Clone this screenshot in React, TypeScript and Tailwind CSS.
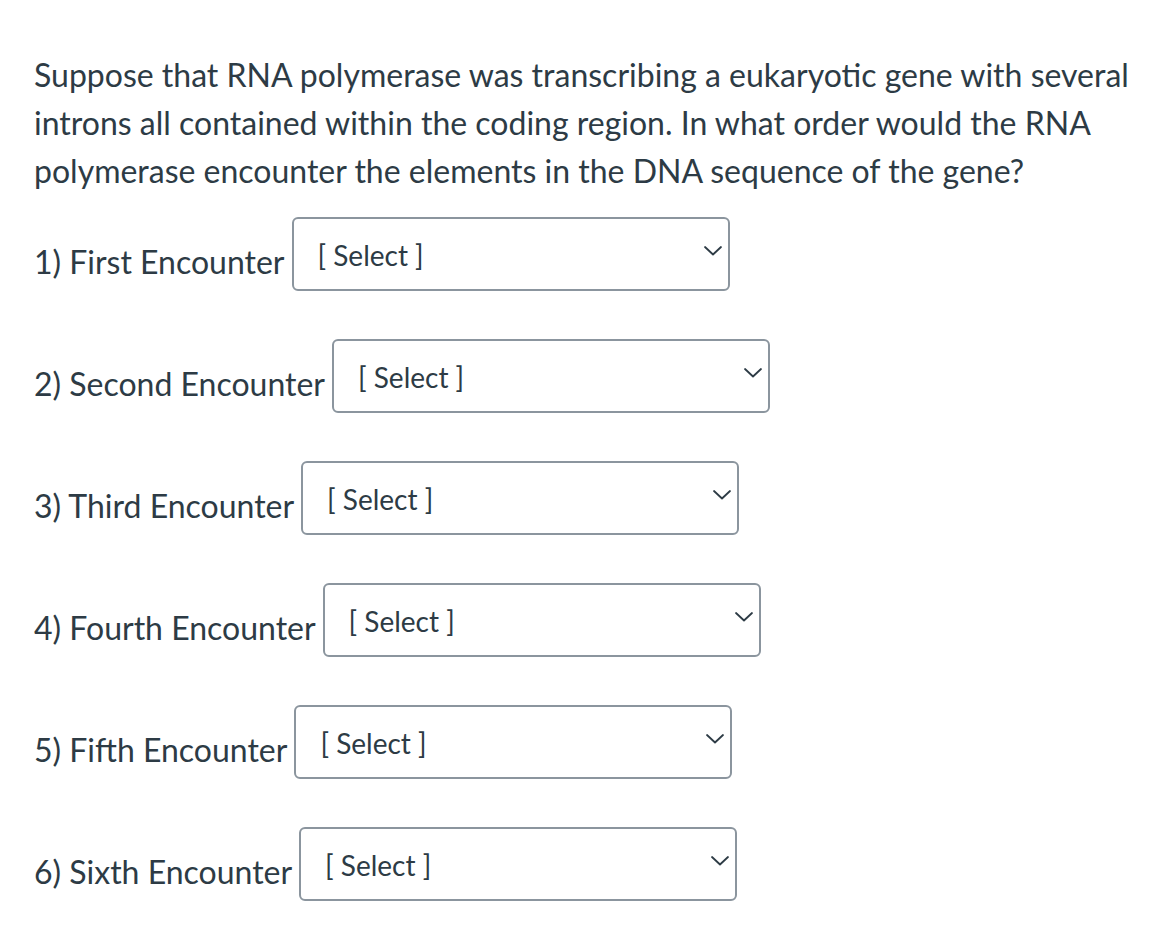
import React from 'react';

const rows = [
  '1) First Encounter',
  '2) Second Encounter',
  '3) Third Encounter',
  '4) Fourth Encounter',
  '5) Fifth Encounter',
  '6) Sixth Encounter',
];

function Chevron() {
  return (
    <svg width="20" height="12" viewBox="0 0 20 12" fill="none" className="shrink-0">
      <path d="M2 2 L10 9.5 L18 2" stroke="#2d3b45" strokeWidth="1.8" strokeLinecap="round" strokeLinejoin="round" />
    </svg>
  );
}

function SelectBox() {
  return (
    <div className="w-[438px] h-[74px] border-2 border-[#8b959e] rounded-[6px] flex items-start justify-between pl-[24px] pr-[5px] bg-white">
      <span className="text-[28px] leading-[74px] -mt-[1px]">[ Select ]</span>
      <div className="h-full flex items-center -mt-[3px]">
        <Chevron />
      </div>
    </div>
  );
}

export default function App() {
  return (
    <div
      className="w-[1168px] h-[938px] bg-white text-[#2d3b45] px-[34px] pt-[51px]"
      style={{ fontFamily: 'Lato, "Open Sans", sans-serif' }}
    >
      <p className="text-[32px] leading-[48px]">
        Suppose that RNA polymerase was transcribing a eukaryotic gene with several introns all contained within the coding region. In what order would the RNA polymerase encounter the elements in the DNA sequence of the gene?
      </p>
      <div className="mt-[22px] flex flex-col gap-[48px]">
        {rows.map((label) => (
          <div key={label} className="flex items-start gap-[7px]">
            <span className="text-[32px] leading-[48px] mt-[21px]">{label}</span>
            <SelectBox />
          </div>
        ))}
      </div>
    </div>
  );
}
